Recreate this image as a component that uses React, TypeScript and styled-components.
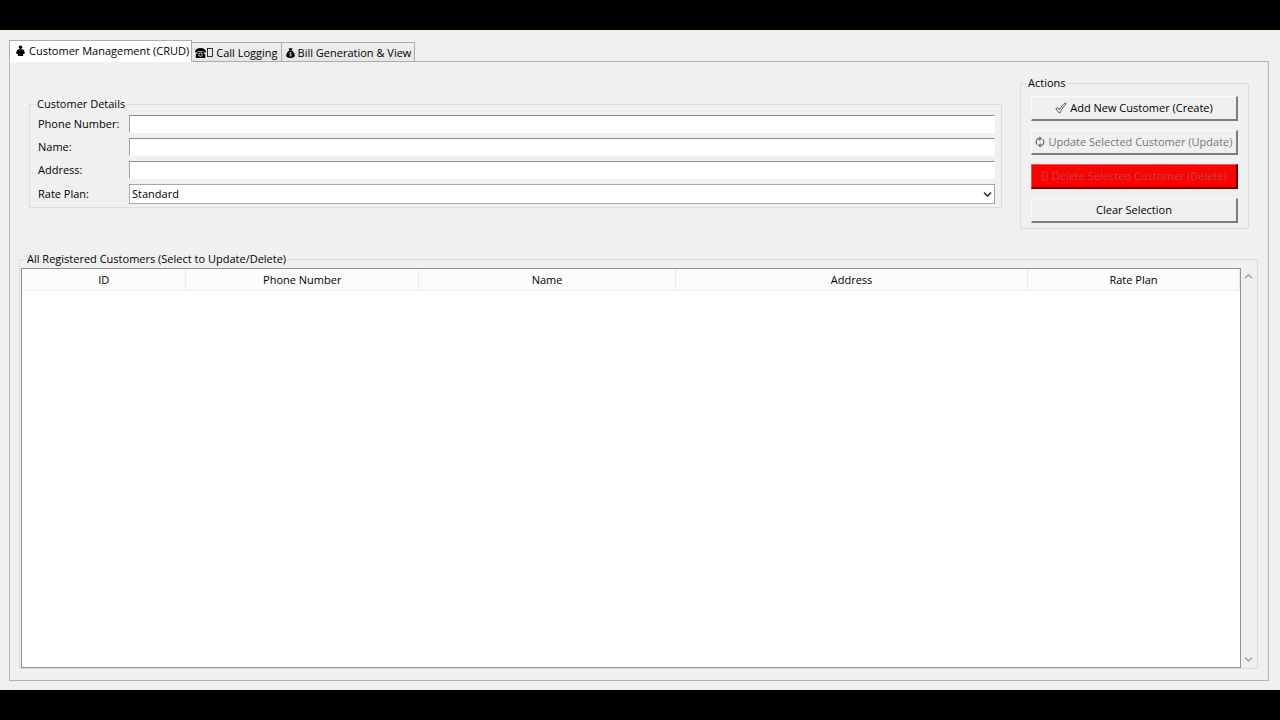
import React, { useId, useState } from "react";
import styled, { createGlobalStyle } from "styled-components";

const GlobalStyle = createGlobalStyle`
  * { box-sizing: border-box; }
  body { margin: 0; background: #000; }
  body, button, input, select {
    font-family: "Open Sans", "Noto Sans", sans-serif;
    font-size: 11px;
    line-height: 16px;
    color: #000;
  }
`;

const Screen = styled.div`
  min-height: 100vh;
  display: flex;
  flex-direction: column;
  padding: 30px 0;
`;

const Window = styled.main`
  flex: 1;
  display: flex;
  flex-direction: column;
  padding: 9px 11px 9px 9px;
  background: #f0f0f0;
  border-top: 1px solid #fbe9cd;
`;

const TabList = styled.div`
  display: flex;
  align-items: flex-end;
  height: 22px;
  margin-bottom: -1px;
`;

const Tab = styled.button<{ $active: boolean }>`
  display: flex;
  align-items: center;
  gap: ${(p) => (p.$active ? 3 : 2)}px;
  height: ${(p) => (p.$active ? 22 : 20)}px;
  margin: 0 0 0 -1px;
  padding: ${(p) => (p.$active ? "0 2px 0 5px" : "2px 3px 0 3px")};
  border: 1px solid #acacac;
  border-bottom-color: ${(p) => (p.$active ? "#fff" : "#acacac")};
  background: ${(p) => (p.$active ? "#fff" : "linear-gradient(#f0f0f0, #e5e5e5)")};
  white-space: nowrap;
  position: relative;
  z-index: ${(p) => (p.$active ? 1 : 0)};
  &:first-child { margin-left: 0; }
`;

const Pane = styled.section`
  flex: 1;
  display: flex;
  flex-direction: column;
  gap: 22px;
  padding: 13px 10px 11px 9px;
  border: 1px solid #b4b4b4;
`;

const TopRow = styled.div`
  display: flex;
  align-items: center;
  gap: 18px;
  padding: 0 9px 0 10px;
`;

const GroupFrame = styled.div<{ $grow?: boolean }>`
  display: flex;
  flex-direction: column;
  flex: ${(p) => (p.$grow ? "1" : "none")};
  min-width: 0;
  margin-top: 8px;
  border: 1px solid #dcdcdc;
`;

const GroupTitle = styled.div`
  align-self: flex-start;
  margin: -9px 0 0 6px;
  padding: 0 1px;
  background: #f0f0f0;
`;

const Form = styled.div`
  display: grid;
  grid-template-columns: 91px 1fr;
  grid-template-rows: 18px 18px 18px 20px;
  row-gap: 5px;
  align-items: center;
  padding: 3px 6px 3px 8px;
`;

const TextField = styled.input`
  width: 100%;
  height: 18px;
  padding: 0 2px;
  border: 1px solid #fff;
  border-top-color: #8c8c8c;
  border-left-color: #a0a0a0;
  border-radius: 0;
  background: #fff;
  outline: none;
`;

const SelectBox = styled.div`
  position: relative;
  svg {
    position: absolute;
    right: 3px;
    top: 7px;
    pointer-events: none;
  }
`;

const Select = styled.select`
  display: block;
  appearance: none;
  width: 100%;
  height: 20px;
  padding: 0 20px 0 2px;
  border: 1px solid #a6a6a6;
  border-radius: 0;
  background: #fff;
  outline: none;
`;

const Actions = styled.div`
  display: flex;
  flex-direction: column;
  gap: 9px;
  width: 227px;
  padding: 5px 10px;
`;

const ActionButton = styled.button<{ $danger?: boolean }>`
  display: flex;
  align-items: center;
  justify-content: center;
  gap: 3px;
  height: 25px;
  padding: 0;
  border: 1px solid;
  border-width: 1px 2px 2px 1px;
  border-color: ${(p) => (p.$danger ? "#ff5050 #700000 #700000 #ff5050" : "#fafafa #7c7c7c #7c7c7c #f8f8f8")};
  background: ${(p) => (p.$danger ? "#f00" : "#f0f0f0")};
  white-space: nowrap;
  &:disabled { color: ${(p) => (p.$danger ? "#b84a40" : "#777")}; }
`;

const TableArea = styled.div`
  flex: 1;
  display: flex;
  padding: 1px 0 0 1px;
`;

const TableFrame = styled.div`
  flex: 1;
  min-width: 0;
  border: 1px solid #909090;
  background: #fff;
`;

const Table = styled.table`
  width: 100%;
  table-layout: fixed;
  border-collapse: separate;
  border-spacing: 0;
`;

const HeaderCell = styled.th<{ $width: string }>`
  width: ${(p) => p.$width};
  height: 22px;
  padding: 0;
  font-weight: 400;
  background: #fcfcfc;
  border-right: 1px solid #ebebeb;
  border-bottom: 1px solid #ededed;
`;

const ScrollTrack = styled.div`
  display: flex;
  flex-direction: column;
  justify-content: space-between;
  width: 16px;
  background: #f0f0f0;
`;

const ScrollButton = styled.button`
  display: flex;
  align-items: center;
  justify-content: center;
  width: 15px;
  height: 17px;
  padding: 0;
  border: 0;
  background: transparent;
`;

const PersonIcon = () => (
  <svg width="11" height="12" viewBox="0 0 11 12" aria-hidden="true">
    <circle cx="5.5" cy="2.2" r="1.8" />
    <path d="M3.4 4.3h4.2c1.4.5 2 1.6 2 3V9H8.1v2H2.9V9H1.4V7.3c0-1.4.6-2.5 2-3z" />
  </svg>
);

const PhoneIcon = () => (
  <svg width="19" height="12" viewBox="0 0 19 12" aria-hidden="true">
    <path d="M.2 4.6C.2 2.3 2.4 1 5.5 1s5.300 1.300 5.300 3.600v.9H8.200V4.200H2.800v1.300H.2z" />
    <path d="M3.400 4.800h4.200l1.100 1.300 1.500 1.400V11H.8V7.500l1.500-1.400z" />
    <circle cx="5.5" cy="7.6" r="1.8" fill="none" stroke="#e9e9e9" strokeWidth=".9" />
    <rect x="12.5" y="1.5" width="5" height="8" fill="none" stroke="#000" strokeWidth=".8" />
  </svg>
);

const MoneyBagIcon = () => (
  <svg width="11" height="12" viewBox="0 0 11 12" aria-hidden="true">
    <path d="M3.600 1.200l1.100.4.9-.6.9.6 1-.4-.7 2H4.300z" />
    <path d="M4.200 3.600h2.700c1.600 1.200 2.900 2.900 2.900 4.800 0 1.600-1.500 2.500-4.300 2.500s-4.300-.9-4.300-2.500c0-1.900 1.400-3.600 3-4.800z" />
    <path d="M6.800 6c-.9-.6-2.500-.5-2.500.4 0 1.100 2.500.6 2.500 1.700 0 .9-1.800 1-2.700.3M5.500 5v4.600" fill="none" stroke="#ddd" strokeWidth=".6" />
  </svg>
);

const CheckIcon = () => (
  <svg width="12" height="12" viewBox="0 0 12 12" aria-hidden="true">
    <path d="M.8 6.8l1.8-1.2 1.8 2.2C5.8 5 7.8 2.6 10.2 1l1 .7C8.7 4.2 6.5 7.4 5 10.8H4z" fill="none" stroke="#333" strokeWidth=".8" strokeLinejoin="round" />
  </svg>
);

const RefreshIcon = () => (
  <svg width="10" height="12" viewBox="0 0 10 12" aria-hidden="true">
    <path d="M2.300 8.600C.9 7.200.8 4.800 2.200 3.400 2.900 2.700 3.700 2.500 4.600 2.500M7.700 3.400c1.400 1.400 1.500 3.800.1 5.200-.7.7-1.500.9-2.400.9" fill="none" stroke="#666" strokeWidth="1.3" />
    <path d="M4.300.3L7 2.500 4.300 4.900zM5.700 7.100L3 9.500l2.700 2.200z" fill="#666" />
  </svg>
);

const EmptyGlyphIcon = () => (
  <svg width="8" height="12" viewBox="0 0 8 12" aria-hidden="true">
    <rect x="1.5" y="2" width="4.5" height="8" fill="none" stroke="#b84a40" strokeWidth=".9" />
  </svg>
);

const Chevron = ({ up = false, color = "#a0a0a0", weight = 1.4 }: { up?: boolean; color?: string; weight?: number }) => (
  <svg width="9" height="7" viewBox="0 0 9 7" aria-hidden="true">
    <path d={up ? "M1 5.2L4.5 1.7 8 5.2" : "M1 1.5L4.5 5 8 1.5"} fill="none" stroke={color} strokeWidth={weight} />
  </svg>
);

const Group = ({ title, grow, children }: { title: string; grow?: boolean; children: React.ReactNode }) => {
  const id = useId();
  return (
    <GroupFrame role="group" aria-labelledby={id} $grow={grow}>
      <GroupTitle id={id}>{title}</GroupTitle>
      {children}
    </GroupFrame>
  );
};

const tabs = [
  { label: "Customer Management (CRUD)", Icon: PersonIcon },
  { label: "Call Logging", Icon: PhoneIcon },
  { label: "Bill Generation & View", Icon: MoneyBagIcon },
];

const fields = [
  { id: "phone", label: "Phone Number:" },
  { id: "name", label: "Name:" },
  { id: "address", label: "Address:" },
];

const columns = [
  { label: "ID", width: "13.5%" },
  { label: "Phone Number", width: "19.1%" },
  { label: "Name", width: "21.1%" },
  { label: "Address", width: "28.9%" },
  { label: "Rate Plan", width: "17.4%" },
];

export default function App() {
  const [active, setActive] = useState(0);
  return (
    <>
      <GlobalStyle />
      <Screen>
        <Window>
          <TabList role="tablist">
            {tabs.map(({ label, Icon }, i) => (
              <Tab key={label} type="button" role="tab" aria-selected={i === active} $active={i === active} onClick={() => setActive(i)}>
                <Icon />
                {label}
              </Tab>
            ))}
          </TabList>
          <Pane role="tabpanel">
            <TopRow>
              <Group title="Customer Details" grow>
                <Form>
                  {fields.map((f) => (
                    <React.Fragment key={f.id}>
                      <label htmlFor={f.id}>{f.label}</label>
                      <TextField id={f.id} type="text" />
                    </React.Fragment>
                  ))}
                  <label htmlFor="plan">Rate Plan:</label>
                  <SelectBox>
                    <Select id="plan" defaultValue="Standard">
                      <option>Standard</option>
                    </Select>
                    <Chevron color="#333" weight={1.6} />
                  </SelectBox>
                </Form>
              </Group>
              <Group title="Actions">
                <Actions>
                  <ActionButton type="button"><CheckIcon />Add New Customer (Create)</ActionButton>
                  <ActionButton type="button" disabled><RefreshIcon />Update Selected Customer (Update)</ActionButton>
                  <ActionButton type="button" disabled $danger><EmptyGlyphIcon />Delete Selected Customer (Delete)</ActionButton>
                  <ActionButton type="button">Clear Selection</ActionButton>
                </Actions>
              </Group>
            </TopRow>
            <Group title="All Registered Customers (Select to Update/Delete)" grow>
              <TableArea>
                <TableFrame>
                  <Table>
                    <thead>
                      <tr>
                        {columns.map((c) => (
                          <HeaderCell key={c.label} scope="col" $width={c.width}>{c.label}</HeaderCell>
                        ))}
                      </tr>
                    </thead>
                  </Table>
                </TableFrame>
                <ScrollTrack>
                  <ScrollButton type="button" aria-label="Scroll up"><Chevron up /></ScrollButton>
                  <ScrollButton type="button" aria-label="Scroll down"><Chevron /></ScrollButton>
                </ScrollTrack>
              </TableArea>
            </Group>
          </Pane>
        </Window>
      </Screen>
    </>
  );
}
